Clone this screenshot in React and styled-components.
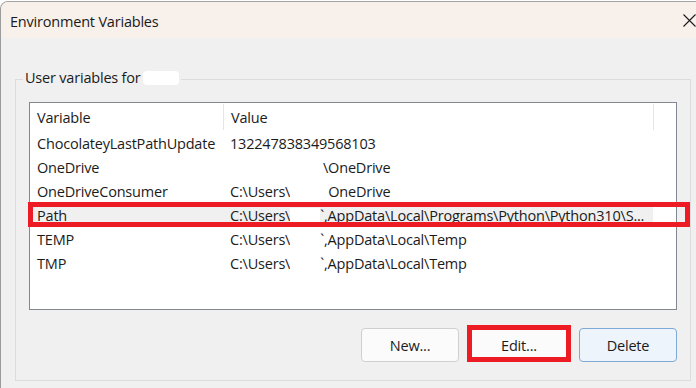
import React from "react";
import styled, { createGlobalStyle, css } from "styled-components";

const Global = createGlobalStyle`
  html, body { margin: 0; padding: 0; background: #ffffff; }
  body {
    font-family: "Open Sans", "Noto Sans", sans-serif;
    font-size: 14px;
    color: #1b1b1b;
    overflow: hidden;
  }
  #root { width: 696px; height: 388px; overflow: hidden; }
`;

const uiText = css`
  font-size: 14.5px;
  letter-spacing: -0.2px;
`;

const Window = styled.div`
  position: relative;
  margin-top: 1px;
  width: 740px;
  height: 400px;
  border-top: 1px solid #a3a3a3;
  border-left: 1px solid #9c9c9c;
  border-top-left-radius: 8px;
  background: #f0f0f0;
  overflow: hidden;
`;

const BehindMark = styled.span`
  position: absolute;
  left: -1px;
  top: 301px;
  width: 1px;
  height: 10px;
  background: #2f6aa8;
`;

const TitleBar = styled.div`
  height: 36px;
  display: flex;
  align-items: center;
  justify-content: space-between;
  padding: 0 0 0 9px;
  width: 696px;
  box-sizing: border-box;
  background: #f8f0ea;
`;

const Title = styled.div`
  ${uiText}
  margin-top: 3px;
`;

const CloseButton = styled.div`
  width: 46px;
  height: 36px;
  display: flex;
  align-items: center;
  justify-content: center;
  margin-right: -15px;
`;

const Content = styled.div`
  padding: 41px 0 0 14px;
`;

const GroupBox = styled.div`
  position: relative;
  width: 676px;
  height: 302px;
  border: 1px solid #dcdcdc;
  box-sizing: border-box;
  padding: 22px 13px 0 13px;
  display: flex;
  flex-direction: column;
`;

const Legend = styled.div`
  ${uiText}
  position: absolute;
  top: -12px;
  left: 7px;
  padding: 0 2px;
  background: #f0f0f0;
  display: flex;
  align-items: center;
  gap: 2px;
`;

const Redact = styled.span`
  display: inline-block;
  flex: none;
  width: ${(p) => p.$w}px;
  height: ${(p) => p.$h || 14}px;
  background: #ffffff;
  border-radius: ${(p) => (p.$round ? 4 : 0)}px;
`;

const ListBox = styled.div`
  border: 1px solid #828790;
  background: #ffffff;
  height: 208px;
  box-sizing: border-box;
  padding: 0 3px;
`;

const HeaderRow = styled.div`
  display: grid;
  grid-template-columns: 190px 430px 1fr;
  height: 28px;
  align-items: center;
`;

const HeaderCell = styled.div`
  ${uiText}
  height: 26px;
  display: flex;
  align-items: center;
  padding-left: ${(p) => (p.$first ? 4 : 7)}px;
  border-left: ${(p) => (p.$first ? "none" : "1px solid #e5e5e5")};
`;

const Row = styled.div`
  position: relative;
  display: grid;
  grid-template-columns: 190px 430px;
  width: 620px;
  height: 24px;
  align-items: center;
  background: ${(p) => (p.$selected ? "#f0f0f0" : "transparent")};
`;

const Cell = styled.div`
  ${uiText}
  white-space: nowrap;
  overflow: hidden;
  padding-left: ${(p) => (p.$first ? 4 : 7)}px;
  display: flex;
  align-items: center;
`;

const Annotation = styled.span`
  position: absolute;
  border: 5px solid #ed1c24;
  pointer-events: none;
  top: ${(p) => p.$t}px;
  left: ${(p) => p.$l}px;
  right: ${(p) => p.$r}px;
  bottom: ${(p) => p.$b}px;
`;

const ButtonBar = styled.div`
  display: flex;
  justify-content: flex-end;
  gap: 11px;
  margin-top: 18px;
`;

const Button = styled.div`
  ${uiText}
  position: relative;
  width: 98px;
  height: 34px;
  box-sizing: border-box;
  display: flex;
  align-items: center;
  justify-content: center;
  border-radius: 4px;
  background: ${(p) => (p.$default ? "#eef4fb" : "#fbfbfb")};
  border: 1px solid ${(p) => (p.$default ? "#7ea9d6" : "#d0d0d0")};
`;

const Value = ({ parts }) =>
  parts.map((p, i) =>
    typeof p === "string" ? <span key={i}>{p}</span> : <Redact key={i} $w={p.w} />
  );

const rows = [
  { name: "ChocolateyLastPathUpdate", value: ["132247838349568103"] },
  { name: "OneDrive", value: [{ w: 93 }, "\\OneDrive"] },
  { name: "OneDriveConsumer", value: ["C:\\Users\\", { w: 38 }, "OneDrive"] },
  {
    name: "Path",
    value: ["C:\\Users\\", { w: 30 }, "`,AppData\\Local\\Programs\\Python\\Python310\\S..."],
    selected: true,
  },
  { name: "TEMP", value: ["C:\\Users\\", { w: 30 }, "`,AppData\\Local\\Temp"] },
  { name: "TMP", value: ["C:\\Users\\", { w: 30 }, "`,AppData\\Local\\Temp"] },
];

const App = () => (
  <>
    <Global />
    <Window>
      <BehindMark />
      <TitleBar>
        <Title>Environment Variables</Title>
        <CloseButton>
          <svg width="13" height="13" viewBox="0 0 13 13">
            <path d="M0.5 0.5 L12.5 12.5 M12.5 0.5 L0.5 12.5" stroke="#1b1b1b" strokeWidth="1.1" />
          </svg>
        </CloseButton>
      </TitleBar>
      <Content>
        <GroupBox>
          <Legend>
            User variables for <Redact $w={36} $h={14} $round />
          </Legend>
          <ListBox>
            <HeaderRow>
              <HeaderCell $first>Variable</HeaderCell>
              <HeaderCell>Value</HeaderCell>
              <HeaderCell />
            </HeaderRow>
            {rows.map((r) => (
              <Row key={r.name} $selected={r.selected}>
                <Cell $first>{r.name}</Cell>
                <Cell>
                  <Value parts={r.value} />
                </Cell>
                {r.selected && <Annotation $t={-1} $l={-5} $r={-37} $b={0} />}
              </Row>
            ))}
          </ListBox>
          <ButtonBar>
            <Button>New...</Button>
            <Button>
              Edit...
              <Annotation $t={-4} $l={-4} $r={-4} $b={-1} />
            </Button>
            <Button $default>Delete</Button>
          </ButtonBar>
        </GroupBox>
      </Content>
    </Window>
  </>
);

export default App;
